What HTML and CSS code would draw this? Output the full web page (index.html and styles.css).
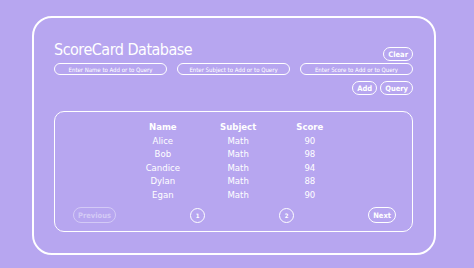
FILE: index.html
```html
<!DOCTYPE html>
<html>
<head>
<meta charset="utf-8">
<link rel="stylesheet" href="styles.css">
</head>
<body>
<div class="card">
  <div class="head">
    <h1 class="title">ScoreCard Database</h1>
    <button class="btn">Clear</button>
  </div>
  <div class="inputs">
    <input class="field" placeholder="Enter Name to Add or to Query">
    <input class="field" placeholder="Enter Subject to Add or to Query">
    <input class="field" placeholder="Enter Score to Add or to Query">
  </div>
  <div class="actions">
    <button class="btn">Add</button>
    <button class="btn">Query</button>
  </div>
  <div class="panel">
    <table class="scores">
      <thead>
        <tr><th>Name</th><th>Subject</th><th>Score</th></tr>
      </thead>
      <tbody>
        <tr><td>Alice</td><td>Math</td><td>90</td></tr>
        <tr><td>Bob</td><td>Math</td><td>98</td></tr>
        <tr><td>Candice</td><td>Math</td><td>94</td></tr>
        <tr><td>Dylan</td><td>Math</td><td>88</td></tr>
        <tr><td>Egan</td><td>Math</td><td>90</td></tr>
      </tbody>
    </table>
    <div class="pager">
      <button class="btn btn-page disabled">Previous</button>
      <button class="btn circle">1</button>
      <button class="btn circle">2</button>
      <button class="btn btn-page">Next</button>
    </div>
  </div>
</div>
</body>
</html>
```
FILE: styles.css
```css
html, body {
  margin: 0;
  padding: 0;
  background: #b7a6f0;
  font-family: "DejaVu Sans Condensed", "DejaVu Sans", Verdana, sans-serif;
  color: #fff;
}
body {
  padding: 16px 38px 13px 32px;
}
.card {
  border: 2px solid #fff;
  border-radius: 20px;
  padding: 20px 21px 21px 20px;
  height: 239px;
  box-sizing: border-box;
}
.head {
  display: flex;
  justify-content: space-between;
  align-items: flex-start;
  height: 22px;
}
.title {
  margin: 2px 0 0 0;
  font-size: 16px;
  font-weight: normal;
  line-height: 20px;
  letter-spacing: -0.5px;
}
.btn {
  font-family: inherit;
  background: transparent;
  color: #fff;
  border: 1.5px solid #fff;
  border-radius: 8px;
  font-weight: bold;
  font-size: 7.5px;
  padding: 0 4px;
  height: 14px;
  line-height: 11px;
  margin: 0;
}
.head .btn {
  margin-top: 9px;
}
.inputs {
  display: flex;
  justify-content: space-between;
  margin-top: 3px;
}
.field {
  width: 113px;
  height: 12px;
  box-sizing: border-box;
  border: 1.5px solid #fff;
  border-radius: 7px;
  background: transparent;
  font-family: inherit;
  font-size: 6px;
  text-align: center;
  padding: 0;
  color: #fff;
}
.field::placeholder {
  color: #fff;
}
.actions {
  display: flex;
  justify-content: flex-end;
  gap: 3px;
  margin-top: 6px;
}
.panel {
  margin-top: 16px;
  border: 1.5px solid #fff;
  border-radius: 10px;
  padding: 8px 16px 8px 18px;
}
.scores {
  margin: 0 auto;
  border-collapse: collapse;
  font-size: 9.5px;
}
.scores th, .scores td {
  padding: 0 20px;
  text-align: center;
  height: 13.5px;
  line-height: 13.5px;
}
.pager {
  display: flex;
  justify-content: space-between;
  align-items: center;
  margin-top: 6px;
}
.btn-page {
  height: 16px;
  border-radius: 9px;
}
.circle {
  width: 15px;
  height: 15px;
  border-radius: 50%;
  padding: 0;
  font-size: 6px;
  border-width: 1.2px;
}
.disabled {
  opacity: 0.4;
}
```
